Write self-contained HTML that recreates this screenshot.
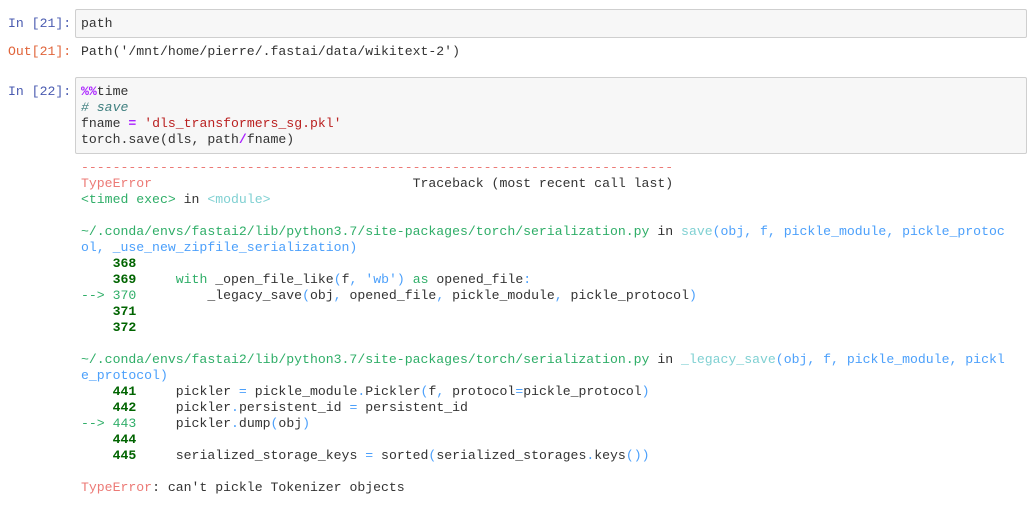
<!DOCTYPE html>
<html><head><style>
body{margin:0;background:#fff;width:1035px;height:510px;overflow:hidden;position:relative;font-family:"Liberation Mono",monospace;font-size:13.17px;color:#333}
.l{position:absolute;white-space:pre;line-height:16px;height:16px}
.box{position:absolute;left:75px;width:950px;background:#f7f7f7;border:1px solid #cfcfcf;border-radius:2px}
.pin{color:#4a5bb0}.pout{color:#e0643a}
.r{color:#ec7a76}.g{color:#2fae68}.c{color:#7fd0d2}.b{color:#4ca0fb}.n{color:#006400;font-weight:bold}
.kw{color:#aa22ff;font-weight:bold}.cm{color:#408080;font-style:italic}.st{color:#ba2121}.op{color:#aa22ff;font-weight:bold}
</style></head><body>
<div class="box" style="top:9px;height:27px"></div>
<div class="l pin" style="left:8px;top:16px">In [21]:</div>
<div class="l" style="left:81px;top:16px">path</div>
<div class="l pout" style="left:8px;top:44px">Out[21]:</div>
<div class="l" style="left:81px;top:44px">Path('/mnt/home/pierre/.fastai/data/wikitext-2')</div>

<div class="box" style="top:77px;height:75px"></div>
<div class="l pin" style="left:8px;top:84px">In [22]:</div>
<div class="l" style="left:81px;top:84px"><span class="kw">%%</span>time</div>
<div class="l cm" style="left:81px;top:100px"># save</div>
<div class="l" style="left:81px;top:116px">fname <span class="op">=</span> <span class="st">'dls_transformers_sg.pkl'</span></div>
<div class="l" style="left:81px;top:132px">torch.save(dls, path<span class="op">/</span>fname)</div>

<div class="l r" style="left:81px;top:160px">---------------------------------------------------------------------------</div>
<div class="l" style="left:81px;top:176px"><span class="r">TypeError</span>                                 Traceback (most recent call last)</div>
<div class="l" style="left:81px;top:192px"><span class="g">&lt;timed exec&gt;</span> in <span class="c">&lt;module&gt;</span></div>
<div class="l" style="left:81px;top:224px"><span class="g">~/.conda/envs/fastai2/lib/python3.7/site-packages/torch/serialization.py</span> in <span class="c">save</span><span class="b">(obj, f, pickle_module, pickle_protoc</span></div>
<div class="l b" style="left:81px;top:240px">ol, _use_new_zipfile_serialization)</div>
<div class="l" style="left:81px;top:256px">    <span class="n">368</span></div>
<div class="l" style="left:81px;top:272px">    <span class="n">369</span>     <span class="g">with</span> _open_file_like<span class="b">(</span>f<span class="b">,</span> <span class="b">'wb'</span><span class="b">)</span> <span class="g">as</span> opened_file<span class="b">:</span></div>
<div class="l" style="left:81px;top:288px"><span class="g">--&gt; 370</span>         _legacy_save<span class="b">(</span>obj<span class="b">,</span> opened_file<span class="b">,</span> pickle_module<span class="b">,</span> pickle_protocol<span class="b">)</span></div>
<div class="l" style="left:81px;top:304px">    <span class="n">371</span></div>
<div class="l" style="left:81px;top:320px">    <span class="n">372</span></div>
<div class="l" style="left:81px;top:352px"><span class="g">~/.conda/envs/fastai2/lib/python3.7/site-packages/torch/serialization.py</span> in <span class="c">_legacy_save</span><span class="b">(obj, f, pickle_module, pickl</span></div>
<div class="l b" style="left:81px;top:368px">e_protocol)</div>
<div class="l" style="left:81px;top:384px">    <span class="n">441</span>     pickler <span class="b">=</span> pickle_module<span class="b">.</span>Pickler<span class="b">(</span>f<span class="b">,</span> protocol<span class="b">=</span>pickle_protocol<span class="b">)</span></div>
<div class="l" style="left:81px;top:400px">    <span class="n">442</span>     pickler<span class="b">.</span>persistent_id <span class="b">=</span> persistent_id</div>
<div class="l" style="left:81px;top:416px"><span class="g">--&gt; 443</span>     pickler<span class="b">.</span>dump<span class="b">(</span>obj<span class="b">)</span></div>
<div class="l" style="left:81px;top:432px">    <span class="n">444</span></div>
<div class="l" style="left:81px;top:448px">    <span class="n">445</span>     serialized_storage_keys <span class="b">=</span> sorted<span class="b">(</span>serialized_storages<span class="b">.</span>keys<span class="b">())</span></div>
<div class="l" style="left:81px;top:480px"><span class="r">TypeError</span>: can't pickle Tokenizer objects</div>
</body></html>
